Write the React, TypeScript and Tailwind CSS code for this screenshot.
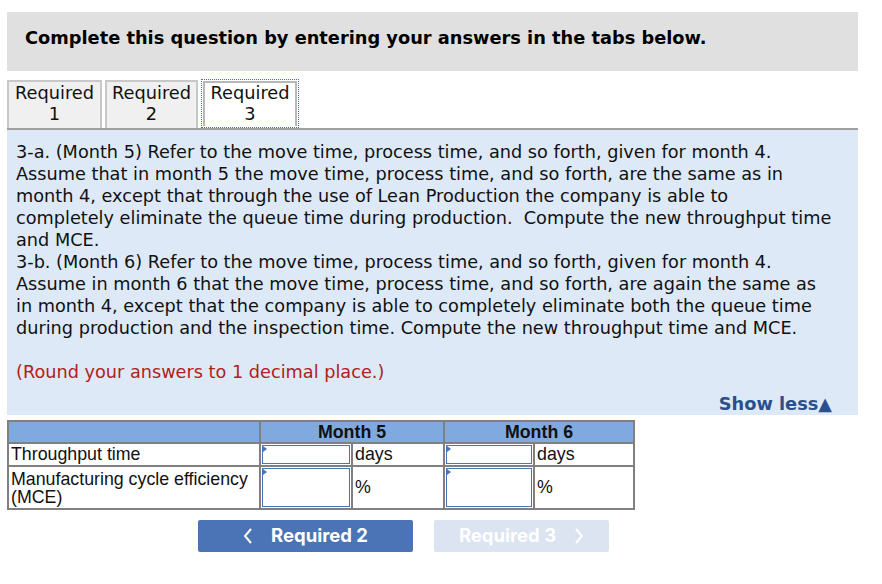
import React from 'react';

const body = [
  '3-a. (Month 5) Refer to the move time, process time, and so forth, given for month 4.',
  'Assume that in month 5 the move time, process time, and so forth, are the same as in',
  'month 4, except that through the use of Lean Production the company is able to',
  'completely eliminate the queue time during production.\u00a0 Compute the new throughput time',
  'and MCE.',
  '3-b. (Month 6) Refer to the move time, process time, and so forth, given for month 4.',
  'Assume in month 6 that the move time, process time, and so forth, are again the same as',
  'in month 4, except that the company is able to completely eliminate both the queue time',
  'during production and the inspection time. Compute the new throughput time and MCE.',
];

const InputCell: React.FC<{ h: string }> = ({ h }) => (
  <td className="relative border-2 border-[#808080] p-px align-top">
    <div className="absolute left-[2px] top-[2px] h-0 w-0 border-y-[3px] border-l-[4px] border-y-transparent border-l-[#4a74b5]" />
    <div className={`${h} w-full border border-[#4a74b5] bg-white`} />
  </td>
);

const App: React.FC = () => {
  return (
    <div className="h-[584px] w-[882px] bg-white pt-3 pl-[7px] pr-6 text-[#111]" style={{ fontFamily: '"DejaVu Sans", Verdana, sans-serif' }}>
      <div className="h-[59px] bg-[#e0e0e0] pl-[18px] pt-[15px]">
        <h2 className="text-[17.8px] font-bold leading-[22px] text-black">Complete this question by entering your answers in the tabs below.</h2>
      </div>

      <div className="mt-[8px] flex items-end gap-[3px]">
        <div className="flex h-[48px] w-[95px] flex-col items-center justify-center border-2 border-b-0 border-[#c8c8c8] bg-[#f0f0f0] pb-[4px] text-[17.8px] leading-[21px]">
          <span>Required</span><span>1</span>
        </div>
        <div className="flex h-[48px] w-[93px] flex-col items-center justify-center border-2 border-b-0 border-[#c8c8c8] bg-[#f0f0f0] pb-[4px] text-[17.8px] leading-[21px]">
          <span>Required</span><span>2</span>
        </div>
        <div className="h-[49px] w-[98px] border border-dotted border-[#3d6fc0] p-px">
          <div className="flex h-full w-full flex-col items-center justify-center border-2 border-b-0 border-[#b8b8b8] bg-white pb-[3px] text-[17.8px] leading-[21px]">
            <span>Required</span><span>3</span>
          </div>
        </div>
      </div>

      <div className="border-t-2 border-[#a0a0a0] bg-[#dde9f7] pl-[9px] pt-[11px] pb-[1px] text-[17.7px] leading-[22px]">
        {body.map((l) => (
          <div key={l} className="whitespace-pre">{l}</div>
        ))}
        <div className="h-[22px]" />
        <div className="text-[#b02020]">(Round your answers to 1 decimal place.)</div>
        <div className="mt-[11px] flex justify-end pr-[26px]">
          <span className="text-[17.8px] font-bold leading-[20px] text-[#2b4f8c]">Show less&#9650;</span>
        </div>
      </div>

      <table className="mt-[5px] border-collapse text-[17.8px] leading-[19px] text-[#111]" style={{ fontFamily: '"Liberation Sans", Arial, sans-serif' }}>
        <thead>
          <tr className="h-[22px] bg-[#80aadf]">
            <th className="w-[252px] border-2 border-[#808080]" />
            <th colSpan={2} className="w-[184px] border-2 border-[#808080] font-bold">Month 5</th>
            <th colSpan={2} className="w-[190px] border-2 border-[#808080] font-bold">Month 6</th>
          </tr>
        </thead>
        <tbody>
          <tr className="h-[23px]">
            <td className="border-2 border-[#808080] px-[2px] text-left">Throughput time</td>
            <InputCell h="h-[19px]" />
            <td className="w-[92px] border-2 border-[#808080] px-[2px]">days</td>
            <InputCell h="h-[19px]" />
            <td className="w-[100px] border-2 border-[#808080] px-[2px]">days</td>
          </tr>
          <tr className="h-[43px]">
            <td className="border-2 border-[#808080] px-[2px] leading-[18px]">Manufacturing cycle efficiency<br />(MCE)</td>
            <InputCell h="h-[39px]" />
            <td className="border-2 border-[#808080] px-[2px]">%</td>
            <InputCell h="h-[39px]" />
            <td className="border-2 border-[#808080] px-[2px]">%</td>
          </tr>
        </tbody>
      </table>

      <div className="mt-[10px] flex gap-[21px] pl-[191px]" style={{ fontFamily: 'Inter, "Noto Sans", sans-serif' }}>
        <button className="flex h-[32px] w-[215px] items-center justify-center gap-[18px] rounded-[2px] bg-[#4a74b5] text-[18.5px] font-bold text-white">
          <svg width="10" height="16" viewBox="0 0 10 16" fill="none" stroke="white" strokeWidth="2"><path d="M8 1 L2 8 L8 15" /></svg>
          <span>Required 2</span>
        </button>
        <button className="flex h-[32px] w-[175px] items-center justify-center gap-[18px] rounded-[2px] bg-[#dbe4f0] text-[18.5px] font-bold text-white">
          <span>Required 3</span>
          <svg width="10" height="16" viewBox="0 0 10 16" fill="none" stroke="white" strokeWidth="2"><path d="M2 1 L8 8 L2 15" /></svg>
        </button>
      </div>
    </div>
  );
};

export default App;
